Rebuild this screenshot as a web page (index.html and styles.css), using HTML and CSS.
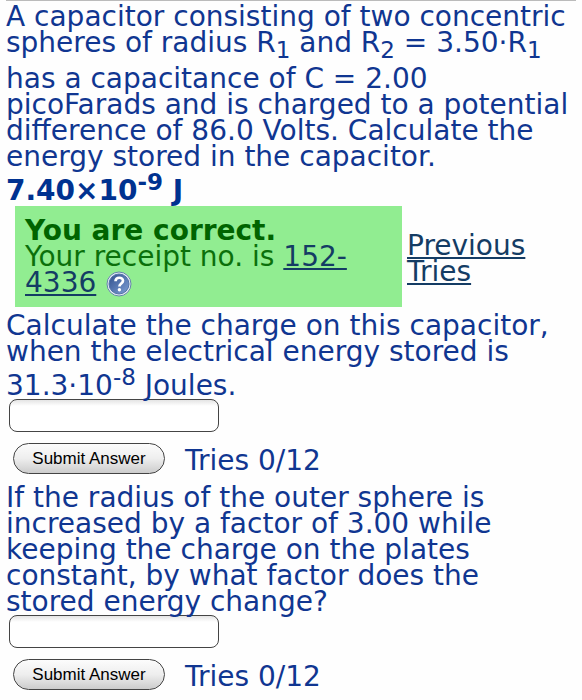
FILE: index.html
```html
<!DOCTYPE html>
<html lang="en">
<head>
<meta charset="utf-8">
<meta name="viewport" content="width=device-width">
<title>Capacitor problem</title>
<link rel="stylesheet" href="styles.css">
</head>
<body>
<main>
<p>A capacitor consisting of two concentric<br>spheres of radius R<sub>1</sub> and R<sub>2</sub> = 3.50·R<sub>1</sub><br>has a capacitance of C = 2.00<br>picoFarads and is charged to a potential<br>difference of 86.0 Volts. Calculate the<br>energy stored in the capacitor.</p>
<p class="answer">7.40×10<sup>-9</sup> J</p>
<div class="result">
  <div class="correct"><strong>You are correct.</strong><br>Your receipt no. is <a href="#receipt">152-<br>4336</a>
    <a class="help" href="#help" aria-label="Help"><svg viewBox="0 0 26 26"><defs><linearGradient id="blue" x1="0" y1="0" x2="1" y2="1"><stop offset="0" stop-color="#304f8c"/><stop offset="1" stop-color="#7fa0d6"/></linearGradient></defs><circle cx="13" cy="13" r="12" fill="#e3ebf3" stroke="#6684aa"/><circle cx="13" cy="13" r="10" fill="url(#blue)" stroke="#5272a9"/><path d="M9.5 10.2C9.7 5.6 17 5.8 17 9.8C17 12.5 13.4 12.5 13.4 15.5" fill="none" stroke="#fff" stroke-width="2.7"/><circle cx="13.4" cy="18.8" r="1.7" fill="#fff"/></svg></a>
  </div>
  <a class="previous" href="#tries">Previous<br>Tries</a>
</div>
<form>
  <label for="charge">Calculate the charge on this capacitor,<br>when the electrical energy stored is<br>31.3·10<sup>-8</sup> Joules.</label>
  <input id="charge" type="text">
  <div class="actions"><button type="button">Submit Answer</button><span>Tries 0/12</span></div>
</form>
<form>
  <label for="factor">If the radius of the outer sphere is<br>increased by a factor of 3.00 while<br>keeping the charge on the plates<br>constant, by what factor does the<br>stored energy change?</label>
  <input id="factor" type="text">
  <div class="actions"><button type="button">Submit Answer</button><span>Tries 0/12</span></div>
</form>
</main>
</body>
</html>
```
FILE: styles.css
```css
* { box-sizing: border-box; }
body {
  margin: 0;
  padding: 0 6px;
  background: #fefefe;
  color: #103691;
  font: 28px/26px Verdana, "DejaVu Sans", sans-serif;
}
main { border-top: 1px solid #bbb; padding-top: 3px; white-space: nowrap; }
p { margin: 0; }
sub, sup { font-size: 23px; }
sub { line-height: 32px; vertical-align: -6px; }
sup { line-height: 25px; vertical-align: 10px; }
a { color: #143c64; text-decoration-thickness: 2px; text-underline-offset: 2px; text-decoration-skip-ink: none; }
.answer { color: #003290; font-weight: bold; }
.result { display: flex; align-items: center; gap: 5px; margin: 2px 0 6px 9px; }
.correct { flex: 0 1 387px; padding: 12px 10px 10px; background: #91ed91; color: #0b700b; }
.correct strong { color: #006400; }
.help { display: inline-block; vertical-align: -5px; height: 26px; margin-left: 1px; }
.help svg { display: block; width: 26px; height: 26px; }
.previous { padding-top: 4px; }
label { display: block; }
input {
  display: block;
  width: 210px;
  height: 33px;
  margin: 0 3px 11px;
  padding: 0 8px;
  border: 1px solid #444;
  border-radius: 8px;
  background: linear-gradient(#e4e4e4, #fff 6px);
  font: 18px "Liberation Sans", sans-serif;
}
.actions { display: flex; align-items: center; gap: 20px; margin: 0 7px 11px; }
button {
  width: 152px;
  height: 31px;
  padding: 0;
  border: 1px solid #444;
  border-radius: 16px;
  background: linear-gradient(#fcfcfc, #eee 50%, #ccc);
  color: #000;
  font: 17px "Liberation Sans", sans-serif;
}
.actions span { padding-top: 4px; }
```
